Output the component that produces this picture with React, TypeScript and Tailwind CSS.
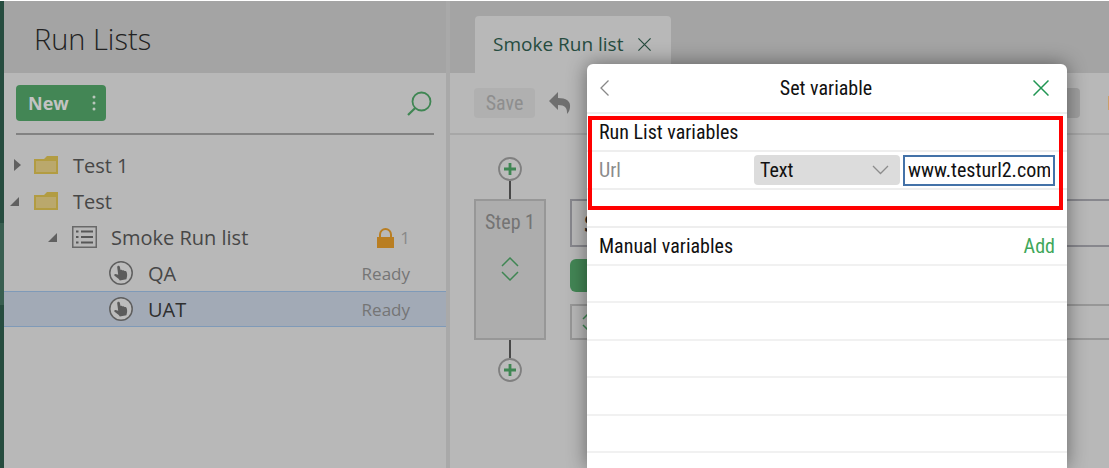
import { FC, ReactNode } from "react";

type TreeRowProps = {
  label: string;
  indent: string;
  icon: ReactNode;
  arrow?: "open" | "closed";
  status?: ReactNode;
  isSelected?: boolean;
};

const FolderIcon: FC = () => (
  <svg width="24" height="20" viewBox="0 0 24 20">
    <path d="M0 4h10l3-3h11v18H0z" fill="#b29c42" />
    <path d="M2 6h20v11H2z" fill="#baa86c" />
  </svg>
);

const ListIcon: FC = () => (
  <svg width="25" height="22" viewBox="0 0 25 22">
    <rect x="0.75" y="0.75" width="23.5" height="20.5" fill="none" stroke="#686868" strokeWidth="1.5" />
    <path d="M4 5.5h2.5M4 11h2.5M4 16.5h2.5M9 5.5h12M9 11h12M9 16.5h12" stroke="#575757" strokeWidth="2" />
  </svg>
);

const TouchIcon: FC = () => (
  <svg width="24" height="24" viewBox="0 0 24 24">
    <circle cx="12" cy="12" r="11.2" fill="#bcbcbc" stroke="#5f5f5f" strokeWidth="1.5" />
    <path
      d="M8.200 6.200c-.3-1.700 2.200-2.200 2.600-.5l.7 3.300c.7-.5 1.700-.3 2 .5.700-.5 1.700-.2 2 .6 1-.3 1.900.2 2.200 1.200.6 2 .6 3.500.1 5.200l-.4 1.700-6.600 1.200-1-1.400-3.900-3c-1.200-1-.6-2.300.7-2.100l2.600.8z"
      fill="#5b5b5b"
    />
  </svg>
);

const LockIcon: FC = () => (
  <svg width="17" height="20" viewBox="0 0 17 20">
    <path d="M3 10V6.500a5.500 5.500 0 0 1 11 0V10" fill="none" stroke="#b97e22" strokeWidth="2" />
    <rect y="9" width="17" height="11" fill="#b97e22" />
  </svg>
);

const SearchIcon: FC = () => (
  <svg width="25" height="25" viewBox="0 0 25 25" fill="none" stroke="#3f8653" strokeWidth="1.8">
    <circle cx="14.5" cy="10.5" r="9" />
    <path d="M8.200 17 1 24" strokeWidth="2.2" />
  </svg>
);

const CloseIcon: FC<{ className: string }> = ({ className }) => (
  <svg className={className} viewBox="0 0 16 16" fill="none" stroke="currentColor" strokeWidth="1.5">
    <path d="m.5.5 15 15M15.500.5l-15 15" />
  </svg>
);

const UndoIcon: FC = () => (
  <svg width="22" height="22" viewBox="0 0 22 22">
    <path d="M0 9 9 0v6c8 0 13 3 12 9.500-.3 2.500-1.200 4.500-3 6.500.5-6-2-9-9-9v5z" fill="#6f6f6f" />
  </svg>
);

const UpDownIcon: FC = () => (
  <svg width="18" height="24" viewBox="0 0 18 24" fill="none" stroke="#3f8653" strokeWidth="1.5">
    <path d="m1 9 8-8 8 8M1 15l8 8 8-8" />
  </svg>
);

const AddStepButton: FC<{ label: string }> = ({ label }) => (
  <button aria-label={label} className="block">
    <svg width="24" height="24" viewBox="0 0 24 24">
      <circle cx="12" cy="12" r="11" fill="#bbbbbb" stroke="#808080" strokeWidth="1.8" />
      <path d="M12 6v12M6 12h12" stroke="#3f8653" strokeWidth="2.8" />
    </svg>
  </button>
);

const TreeRow: FC<TreeRowProps> = ({ label, indent, icon, arrow, status, isSelected }) => (
  <li
    className={
      "flex h-9 items-center border-y pr-9 " +
      indent +
      (isSelected ? " border-[#7f9ab8] bg-[#a2aab6] text-[#2f2f2f]" : " border-transparent text-[#474747]")
    }
  >
    <span className="w-6 shrink-0">
      {arrow === "closed" && (
        <svg width="12" height="12" viewBox="0 0 12 12">
          <path d="M4 0v12l7-6z" fill="#606060" />
        </svg>
      )}
      {arrow === "open" && (
        <svg width="12" height="12" viewBox="0 0 12 12">
          <path d="M9 2v9H0z" fill="#606060" />
        </svg>
      )}
    </span>
    <span className="flex w-[39px] shrink-0 items-center">{icon}</span>
    <span className="flex-1 pt-0.5 text-[20px]">{label}</span>
    <span className="flex items-center gap-1.5 pt-0.5 text-[17px] text-[#757575]">{status}</span>
  </li>
);

const Sidebar: FC = () => (
  <aside className="flex w-[442px] shrink-0 flex-col bg-[#b8b8b8]">
    <h1 className="flex h-[72px] items-center bg-[#a4a4a4] pl-[30px] pt-1 text-[29px] font-light text-[#222]">
      Run Lists
    </h1>
    <div className="mx-3 flex h-[62px] items-center justify-between border-b-2 border-[#828282]">
      <button className="flex h-9 w-[90px] items-center justify-between rounded-sm bg-[#438655] pl-3 pr-2.5 text-[18px] font-bold text-[#c3c3c3]">
        New
        <svg width="4" height="16" viewBox="0 0 4 16" fill="#b9c6bb">
          <circle cx="2" cy="2" r="1.5" />
          <circle cx="2" cy="8" r="1.5" />
          <circle cx="2" cy="14" r="1.5" />
        </svg>
      </button>
      <button aria-label="Search" className="mr-0.5">
        <SearchIcon />
      </button>
    </div>
    <ul className="pt-3">
      <TreeRow label="Test 1" indent="pl-1.5" arrow="closed" icon={<FolderIcon />} />
      <TreeRow label="Test" indent="pl-1.5" arrow="open" icon={<FolderIcon />} />
      <TreeRow
        label="Smoke Run list"
        indent="pl-11"
        arrow="open"
        icon={<ListIcon />}
        status={
          <>
            <LockIcon />
            <span className="text-[#898989]">1</span>
          </>
        }
      />
      <TreeRow label="QA" indent="pl-[81px]" icon={<TouchIcon />} status="Ready" />
      <TreeRow label="UAT" indent="pl-[81px]" icon={<TouchIcon />} status="Ready" isSelected />
    </ul>
  </aside>
);

const Workspace: FC = () => (
  <main className="flex min-w-0 flex-1 flex-col bg-[#b8b8b8]">
    <div className="flex h-[72px] items-end bg-[#a4a4a4] pl-[25px]">
      <div className="flex h-[57px] w-[196px] items-center justify-between rounded-t bg-[#b8b8b8] pl-[18px] pr-5 text-[19px] text-[#264c3f]">
        Smoke Run list
        <button aria-label="Close tab">
          <CloseIcon className="size-[13px]" />
        </button>
      </div>
    </div>
    <div className="flex h-[62px] items-center border-b-2 border-[#a7a7a7] pl-6 font-['Roboto_Condensed','Liberation_Sans_Narrow',Roboto,sans-serif] text-[20px]">
      <button className="h-[30px] w-[61px] rounded bg-[#b0b0b0] text-[#8e8e8e]" disabled>
        Save
      </button>
      <button aria-label="Undo" className="ml-3.5">
        <UndoIcon />
      </button>
      <button aria-label="Options" className="ml-auto mr-7 h-[30px] w-[61px] rounded bg-[#a1a1a1]" />
      <span className="h-3.5 w-px bg-[#c9a06a]" />
    </div>
    <div className="flex gap-6 pl-6 pt-[22px]">
      <div className="flex w-[72px] shrink-0 flex-col items-center">
        <AddStepButton label="Add step before" />
        <div className="h-[18px] w-0.5 bg-[#484848]" />
        <div className="flex h-[141px] w-full flex-col items-center gap-5 border-2 border-[#979797] bg-[#adadad] pt-1.5 font-['Roboto_Condensed','Liberation_Sans_Narrow',Roboto,sans-serif] text-[20px] leading-[30px] text-[#747474]">
          Step 1
          <UpDownIcon />
        </div>
        <div className="h-[18px] w-0.5 bg-[#484848]" />
        <AddStepButton label="Add step after" />
      </div>
      <div className="flex flex-1 flex-col gap-3 pt-[42px]">
        <div className="flex h-12 items-center border-2 border-r-0 border-[#87878d] pl-3 text-[24px] font-bold text-[#222]">S</div>
        <button aria-label="Run step" className="h-[33px] w-40 rounded-md bg-[#438655]" />
        <div className="flex h-9 items-center border-2 border-r-0 border-[#979797] pl-2.5">
          <UpDownIcon />
        </div>
      </div>
    </div>
  </main>
);

const VariableDialog: FC = () => (
  <section
    role="dialog"
    aria-labelledby="dialog-title"
    className="absolute bottom-0 right-[42px] top-[63px] w-[480px] rounded-t-md bg-white font-['Roboto_Condensed','Liberation_Sans_Narrow',Roboto,sans-serif] text-[20px] text-[#111] shadow-[0_0_20px_rgba(0,0,0,0.45)]"
  >
    <header className="flex h-[50px] items-center justify-between border-b-2 border-[#eee] px-3">
      <button aria-label="Back" className="w-5 text-[#888]">
        <svg width="10" height="16" viewBox="0 0 10 16" fill="none" stroke="currentColor" strokeWidth="1.3">
          <path d="M9.500.5 2 8l7.500 7.500" />
        </svg>
      </button>
      <h2 id="dialog-title">Set variable</h2>
      <button aria-label="Close" className="mr-1.5 text-[#219653]">
        <CloseIcon className="size-4" />
      </button>
    </header>
    <h3 className="flex h-[38px] items-center border-b-2 border-[#eee] px-3">Run List variables</h3>
    <div className="flex h-[38px] items-center border-b-2 border-[#eee] px-3">
      <label htmlFor="url-value" className="flex-1 text-[#8b8b8b]">
        Url
      </label>
      <div className="relative">
        <select
          aria-label="Variable type"
          className="block h-[30px] w-[146px] appearance-none rounded bg-[#dcdcdc] px-1.5"
          defaultValue="Text"
        >
          <option>Text</option>
        </select>
        <svg
          className="pointer-events-none absolute right-[11px] top-2.5"
          width="17"
          height="10"
          viewBox="0 0 17 10"
          fill="none"
          stroke="#8c8c8c"
          strokeWidth="1.3"
        >
          <path d="m1 1 7.500 7.500L16 1" />
        </svg>
      </div>
      <input
        id="url-value"
        className="ml-[3px] h-[31px] w-[152px] border-2 border-[#4472a8] bg-white px-[3px] outline-none"
        defaultValue="www.testurl2.com"
      />
    </div>
    <div className="h-[38px] border-b-2 border-[#eee]" />
    <div className="flex h-[38px] items-center justify-between border-b-2 border-[#f1f1f1] px-3">
      <h3>Manual variables</h3>
      <button className="text-[#3fa75a]">Add</button>
    </div>
    {[1, 2, 3, 4, 5].map((row) => (
      <div key={row} className="border-b-2 border-[#f1f1f1] odd:h-[38px] even:h-[37px]" />
    ))}
    <div className="pointer-events-none absolute left-px right-1 top-[52px] h-[94px] border-4 border-[#ff0000]" />
  </section>
);

export default function App() {
  return (
    <div className="relative flex min-h-screen overflow-hidden border-t border-white bg-[#b8b8b8] font-['Segoe_UI','Open_Sans','Noto_Sans',sans-serif]">
      <nav aria-label="Sections" className="flex w-1 shrink-0 flex-col bg-[#264c3f] pt-[222px]">
        <span className="h-[82px] bg-[#385e50]" />
      </nav>
      <Sidebar />
      <div className="w-1 shrink-0 bg-[#a9a9a9]" />
      <Workspace />
      <VariableDialog />
    </div>
  );
}
